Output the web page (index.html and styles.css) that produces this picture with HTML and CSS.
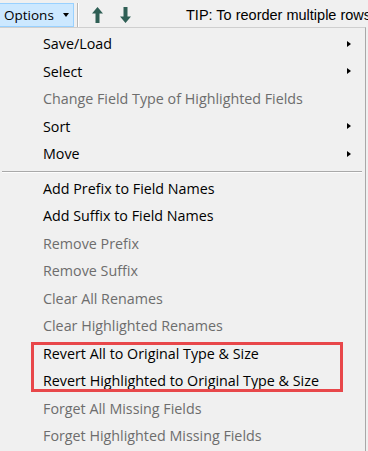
FILE: index.html
```html
<!DOCTYPE html>
<html>
<head>
<meta charset="utf-8">
<link rel="stylesheet" href="styles.css">
</head>
<body>
<div class="toolbar">
  <div class="opt-btn"><span class="opt-label">Options</span><span class="caret"></span></div>
  <div class="vsep"></div>
  <svg class="arrow up" width="11" height="16" viewBox="0 0 11 16"><path d="M5.5 0 L11 6.5 L7.5 6.5 L7.5 16 L3.5 16 L3.5 6.5 L0 6.5 Z" fill="#2f5f55"/></svg>
  <svg class="arrow down" width="11" height="16" viewBox="0 0 11 16"><path d="M5.5 16 L11 9.5 L7.5 9.5 L7.5 0 L3.5 0 L3.5 9.5 L0 9.5 Z" fill="#2f5f55"/></svg>
  <div class="tip">TIP: To reorder multiple rows</div>
</div>
<div class="menu">
  <div class="item">Save/Load<span class="sub"></span></div>
  <div class="item">Select<span class="sub"></span></div>
  <div class="item disabled">Change Field Type of Highlighted Fields</div>
  <div class="item">Sort<span class="sub"></span></div>
  <div class="item">Move<span class="sub"></span></div>
  <div class="sep"></div>
  <div class="item">Add Prefix to Field Names</div>
  <div class="item">Add Suffix to Field Names</div>
  <div class="item disabled">Remove Prefix</div>
  <div class="item disabled">Remove Suffix</div>
  <div class="item disabled">Clear All Renames</div>
  <div class="item disabled">Clear Highlighted Renames</div>
  <div class="group">
    <div class="item">Revert All to Original Type &amp; Size</div>
    <div class="item">Revert Highlighted to Original Type &amp; Size</div>
  </div>
  <div class="item disabled">Forget All Missing Fields</div>
  <div class="item disabled">Forget Highlighted Missing Fields</div>
</div>
</body>
</html>
```
FILE: styles.css
```css
html, body {
  margin: 0;
  padding: 0;
  background: #f0f0f0;
  overflow: hidden;
}
body {
  width: 368px;
  height: 451px;
  font-family: "Open Sans", "Noto Sans", sans-serif;
}
.toolbar {
  height: 27px;
  display: flex;
  align-items: center;
  white-space: nowrap;
  overflow: hidden;
}
.toolbar > * {
  flex-shrink: 0;
}
.opt-btn {
  box-sizing: border-box;
  height: 24px;
  width: 74px;
  margin-top: 3px;
  align-self: flex-start;
  background: #cce8ff;
  border: 1px solid #99d1ff;
  border-left: none;
  display: flex;
  align-items: center;
  padding-left: 4px;
  font-size: 13.5px;
  color: #000;
}
.opt-label {
  flex: 1;
}
.caret {
  width: 0;
  height: 0;
  border-left: 3.5px solid transparent;
  border-right: 3.5px solid transparent;
  border-top: 4px solid #000;
  margin-right: 4px;
}
.vsep {
  width: 1px;
  height: 24px;
  margin-top: 3px;
  align-self: flex-start;
  margin-left: 3px;
  background: #b8b8b8;
  border-right: 1px solid #fff;
}
.arrow.up {
  margin-left: 13px;
  margin-top: 2px;
}
.arrow.down {
  margin-left: 17px;
  margin-top: 2px;
}
.tip {
  margin-left: 55px;
  font-family: "Liberation Sans", Arial, sans-serif;
  font-size: 14.5px;
  color: #000;
  margin-top: 2px;
}
.menu {
  box-sizing: border-box;
  width: 366px;
  height: 424px;
  border-top: 1px solid #cfcfcf;
  border-right: 1px solid #a8a8a8;
  padding-top: 2px;
}
.item {
  height: 27.5px;
  display: flex;
  align-items: center;
  padding-left: 43px;
  padding-right: 14px;
  font-size: 14.3px;
  color: #000;
  white-space: nowrap;
}
.item.disabled {
  color: #6d6d6d;
}
.sub {
  margin-left: auto;
  width: 0;
  height: 0;
  border-top: 3.5px solid transparent;
  border-bottom: 3.5px solid transparent;
  border-left: 4px solid #000;
}
.sep {
  height: 1px;
  margin: 3px 3px 2px 2px;
  background: #a9a9a9;
  border-bottom: 1px solid #fdfdfd;
}
.group {
  position: relative;
}
.group::after {
  content: "";
  position: absolute;
  left: 31px;
  width: 312px;
  top: 2.5px;
  bottom: 2.5px;
  box-sizing: border-box;
  border: 3px solid #e8474a;
  pointer-events: none;
}
```
